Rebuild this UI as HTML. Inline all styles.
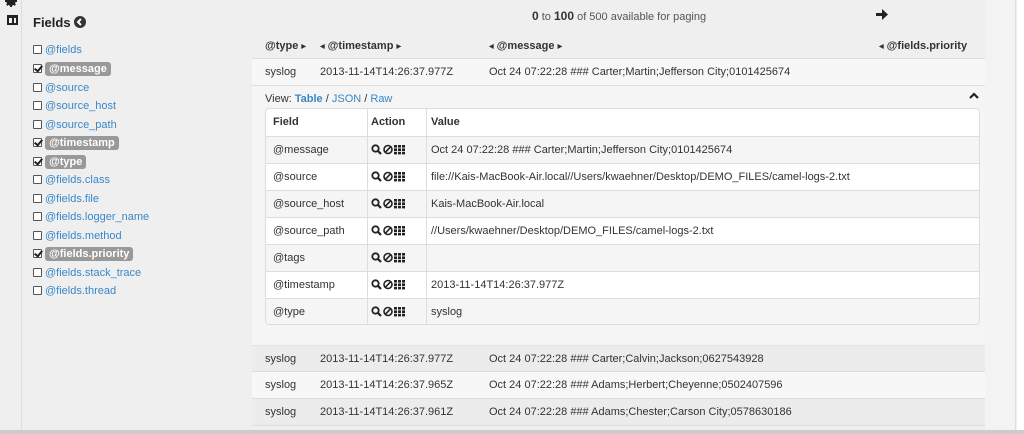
<!DOCTYPE html>
<html><head><meta charset="utf-8"><style>
*{margin:0;padding:0;box-sizing:border-box}
body{width:1024px;height:434px;overflow:hidden;background:#efefef;font-family:"Liberation Sans",Arial,sans-serif;font-size:11px;color:#333;position:relative}
.a{position:absolute;white-space:nowrap}
.lnk{color:#3a87c8}
.f{position:absolute;left:33px;height:15px;line-height:15px;font-size:11px}
.cb{display:inline-block;width:9px;height:9px;border:1px solid #555;background:#fff;vertical-align:-1px;margin-right:3px;position:relative;border-radius:1px}
.cb.on:after{content:"";position:absolute;left:2px;top:-1px;width:3px;height:6px;border:solid #222;border-width:0 2px 2px 0;transform:rotate(40deg)}
.tag{background:#999;color:#fff;font-weight:bold;padding:1px 4px;border-radius:3px}
.row{position:absolute;left:252px;width:733px;height:27px;line-height:26px;border-bottom:1px solid #ddd}
.row span{position:absolute;top:0}
.it{position:absolute;left:265px;top:108px;width:715px;border:1px solid #ddd;border-radius:4px;background:#fff;overflow:hidden}
.it div.r{height:27px;line-height:26px;border-top:1px solid #ddd;position:relative}
.it div.h{border-top:0;font-weight:bold}
.it div.g{background:#f5f5f5}
.it span{position:absolute;top:0}
.c1{left:7px}.c2{left:105px}.c3{left:165px}
.vl{position:absolute;top:0;bottom:0;width:1px;background:#ddd;z-index:2}
.ic svg{vertical-align:-2px}
.sm{font-size:6px;vertical-align:1px}
</style></head><body>
<svg width="0" height="0" style="position:absolute"><defs>
<g id="ico">
<circle cx="4.5" cy="4.5" r="3.2" fill="none" stroke="#222" stroke-width="1.8"/><line x1="7" y1="7" x2="10" y2="10" stroke="#222" stroke-width="2.2"/>
<circle cx="17" cy="5.5" r="4" fill="none" stroke="#222" stroke-width="1.6"/><line x1="14.3" y1="8.3" x2="19.7" y2="2.7" stroke="#222" stroke-width="1.6"/>
<g fill="#222"><rect x="23" y="1" width="3" height="2.6"/><rect x="27" y="1" width="3" height="2.6"/><rect x="31" y="1" width="3" height="2.6"/><rect x="23" y="4.4" width="3" height="2.6"/><rect x="27" y="4.4" width="3" height="2.6"/><rect x="31" y="4.4" width="3" height="2.6"/><rect x="23" y="7.8" width="3" height="2.6"/><rect x="27" y="7.8" width="3" height="2.6"/><rect x="31" y="7.8" width="3" height="2.6"/></g>
</g></defs></svg>
<div class="a" style="left:0;top:0;width:22px;height:434px;background:#efefef;border-right:1px solid #ddd"></div>
<svg class="a" style="left:5px;top:-5px" width="12" height="12" viewBox="0 0 12 12"><circle cx="6" cy="6" r="3.5" fill="none" stroke="#222" stroke-width="2.5"/><g stroke="#222" stroke-width="2"><line x1="6" y1="0" x2="6" y2="12"/><line x1="0" y1="6" x2="12" y2="6"/><line x1="1.8" y1="1.8" x2="10.2" y2="10.2"/><line x1="1.8" y1="10.2" x2="10.2" y2="1.8"/></g></svg>
<div class="a" style="left:7px;top:15px;width:11px;height:10px;border:2px solid #222;border-top-width:3px"><div style="position:absolute;left:3px;top:0;width:2px;height:5px;background:#222"></div></div>
<div class="a" style="left:33px;top:15px;font-size:13px;font-weight:bold;color:#222">Fields <svg width="12" height="12" viewBox="0 0 12 12" style="vertical-align:-1px"><circle cx="6" cy="6" r="6" fill="#333"/><path d="M7 3 L4 6 L7 9" fill="none" stroke="#fff" stroke-width="2"/></svg></div>
<div class="f" style="top:43px"><span class="cb"></span><span class="lnk">@fields</span></div>
<div class="f" style="top:62px"><span class="cb on"></span><span class="tag">@message</span></div>
<div class="f" style="top:81px"><span class="cb"></span><span class="lnk">@source</span></div>
<div class="f" style="top:99px"><span class="cb"></span><span class="lnk">@source_host</span></div>
<div class="f" style="top:118px"><span class="cb"></span><span class="lnk">@source_path</span></div>
<div class="f" style="top:136px"><span class="cb on"></span><span class="tag">@timestamp</span></div>
<div class="f" style="top:155px"><span class="cb on"></span><span class="tag">@type</span></div>
<div class="f" style="top:173px"><span class="cb"></span><span class="lnk">@fields.class</span></div>
<div class="f" style="top:192px"><span class="cb"></span><span class="lnk">@fields.file</span></div>
<div class="f" style="top:210px"><span class="cb"></span><span class="lnk">@fields.logger_name</span></div>
<div class="f" style="top:229px"><span class="cb"></span><span class="lnk">@fields.method</span></div>
<div class="f" style="top:247px"><span class="cb on"></span><span class="tag">@fields.priority</span></div>
<div class="f" style="top:266px"><span class="cb"></span><span class="lnk">@fields.stack_trace</span></div>
<div class="f" style="top:284px"><span class="cb"></span><span class="lnk">@fields.thread</span></div>

<div class="a" style="left:985px;top:0;width:31px;height:430px;background:#f3f3f3;border-right:1px solid #ddd"></div>
<div class="a" style="left:1017px;top:0;width:7px;height:430px;background:#fff"></div>
<div class="a" style="left:0;top:430px;width:1024px;height:4px;background:#ccc"></div>

<div class="a" style="left:532px;top:9px;font-size:11px;color:#555"><b style="font-size:12px;color:#333">0</b> to <b style="font-size:12px;color:#333">100</b> of 500 available for paging</div>
<svg class="a" style="left:876px;top:9px" width="12" height="11" viewBox="0 0 12 11"><path d="M0 4h6V0l6 5.5-6 5.5V7H0z" fill="#222"/></svg>

<div class="a" style="left:252px;top:58px;width:733px;height:1px;background:#ddd"></div>
<div class="a" style="left:265px;top:40px;font-weight:bold">@type <span class="sm">▶</span></div>
<div class="a" style="left:320px;top:40px;font-weight:bold"><span class="sm">◀</span> @timestamp <span class="sm">▶</span></div>
<div class="a" style="left:489px;top:40px;font-weight:bold"><span class="sm">◀</span> @message <span class="sm">▶</span></div>
<div class="a" style="left:879px;top:40px;font-weight:bold"><span class="sm">◀</span> @fields.priority</div>

<div class="row" style="top:59px;background:#f7f7f7"><span style="left:13px">syslog</span><span style="left:68px">2013-11-14T14:26:37.977Z</span><span style="left:237px">Oct 24 07:22:28 ### Carter;Martin;Jefferson City;0101425674</span></div>
<div class="a" style="left:252px;top:86px;width:733px;height:259px;background:#f5f5f5"></div>
<div class="a" style="left:265px;top:93px">View: <b class="lnk">Table</b> / <span class="lnk">JSON</span> / <span class="lnk">Raw</span></div>
<svg class="a" style="left:969px;top:92px" width="10" height="7" viewBox="0 0 10 7"><path d="M1 6 L5 2 L9 6" fill="none" stroke="#222" stroke-width="2.2"/></svg>
<div class="it">
<div class="vl" style="left:101px"></div><div class="vl" style="left:160px"></div>
<div class="r h"><span class="c1">Field</span><span class="c2">Action</span><span class="c3">Value</span></div>
<div class="r g"><span class="c1">@message</span><span class="c2 ic"><svg width="35" height="11"><use href="#ico"/></svg></span><span class="c3">Oct 24 07:22:28 ### Carter;Martin;Jefferson City;0101425674</span></div>
<div class="r"><span class="c1">@source</span><span class="c2 ic"><svg width="35" height="11"><use href="#ico"/></svg></span><span class="c3">file://Kais-MacBook-Air.local//Users/kwaehner/Desktop/DEMO_FILES/camel-logs-2.txt</span></div>
<div class="r g"><span class="c1">@source_host</span><span class="c2 ic"><svg width="35" height="11"><use href="#ico"/></svg></span><span class="c3">Kais-MacBook-Air.local</span></div>
<div class="r"><span class="c1">@source_path</span><span class="c2 ic"><svg width="35" height="11"><use href="#ico"/></svg></span><span class="c3">//Users/kwaehner/Desktop/DEMO_FILES/camel-logs-2.txt</span></div>
<div class="r g"><span class="c1">@tags</span><span class="c2 ic"><svg width="35" height="11"><use href="#ico"/></svg></span></div>
<div class="r"><span class="c1">@timestamp</span><span class="c2 ic"><svg width="35" height="11"><use href="#ico"/></svg></span><span class="c3">2013-11-14T14:26:37.977Z</span></div>
<div class="r g" style="height:26px"><span class="c1">@type</span><span class="c2 ic"><svg width="35" height="11"><use href="#ico"/></svg></span><span class="c3">syslog</span></div>
</div>

<div class="row" style="top:345px;background:#ececec;border-top:1px solid #e3e3e3"><span style="left:13px">syslog</span><span style="left:68px">2013-11-14T14:26:37.977Z</span><span style="left:237px">Oct 24 07:22:28 ### Carter;Calvin;Jackson;0627543928</span></div>
<div class="row" style="top:372px;background:#f7f7f7"><span style="left:13px">syslog</span><span style="left:68px">2013-11-14T14:26:37.965Z</span><span style="left:237px">Oct 24 07:22:28 ### Adams;Herbert;Cheyenne;0502407596</span></div>
<div class="row" style="top:399px;background:#ececec"><span style="left:13px">syslog</span><span style="left:68px">2013-11-14T14:26:37.961Z</span><span style="left:237px">Oct 24 07:22:28 ### Adams;Chester;Carson City;0578630186</span></div>
</body></html>
